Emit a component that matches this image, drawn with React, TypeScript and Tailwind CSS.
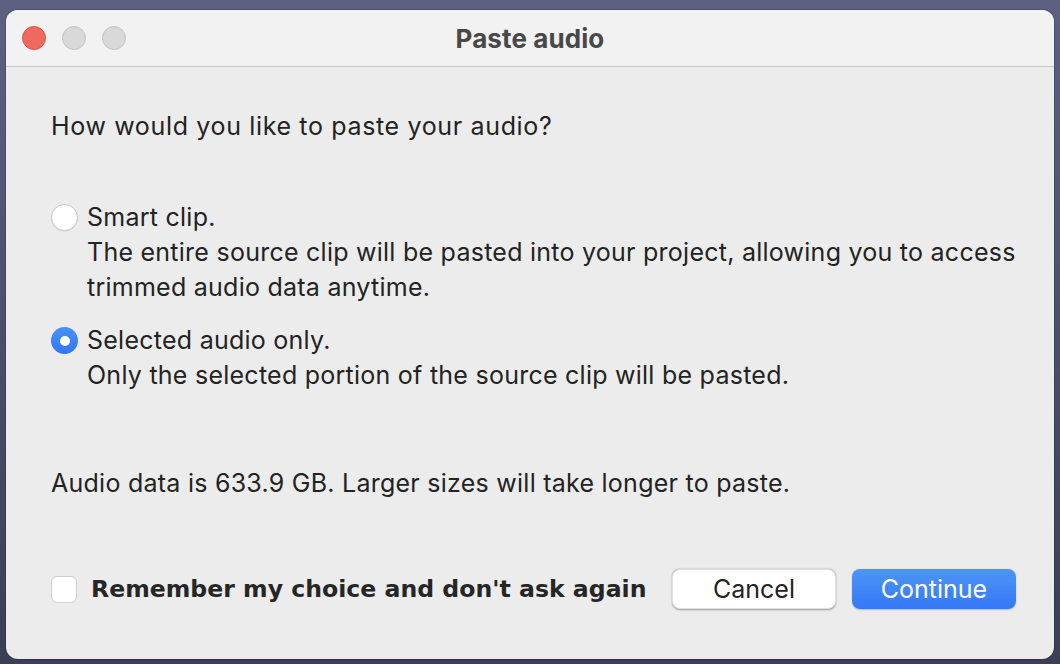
import React from "react";

export default function App() {
  const body = { fontFamily: "Inter, 'Noto Sans', sans-serif" };
  return (
    <div
      className="w-[1060px] h-[664px] overflow-hidden bg-gradient-to-b from-[#5d6081] to-[#3c3e55] pt-[10px] pl-[6px]"
      style={body}
    >
      <div className="w-[1048px] h-[649px] rounded-[12px] bg-[#ececec] overflow-hidden flex flex-col shadow-[0_0_0_1px_rgba(0,0,0,0.15)]">
        {/* Title bar */}
        <div className="relative h-[57px] shrink-0 bg-[#f1f2f1] border-b border-[#c9c9c9] flex items-center">
          <div className="flex items-center gap-[16px] pl-[16px]">
            <span className="w-[24px] h-[24px] rounded-full bg-[#ee6a5f] border border-[#d9554b]" />
            <span className="w-[24px] h-[24px] rounded-full bg-[#d9d9d9] border border-[#c3c3c3]" />
            <span className="w-[24px] h-[24px] rounded-full bg-[#d9d9d9] border border-[#c3c3c3]" />
          </div>
          <div className="absolute inset-0 flex items-center justify-center pointer-events-none">
            <span className="text-[26px] font-bold text-[#484848] tracking-[0.1px]">Paste audio</span>
          </div>
        </div>

        {/* Content */}
        <div className="flex flex-col pl-[45px] pr-[38px] pt-[42px] text-[25px] leading-[35px] tracking-[0.25px] text-[#232323]">
          <div className="tracking-[0.65px]">How would you like to paste your audio?</div>

          <div className="mt-[56px] flex flex-col gap-[18px]">
            <div className="flex items-start">
              <span className="mt-[4px] w-[27px] h-[27px] rounded-full bg-white border border-[#c9c9c9] shadow-[0_0.5px_1px_rgba(0,0,0,0.1)] shrink-0" />
              <div className="ml-[9px] flex flex-col whitespace-nowrap">
                <span>Smart clip.</span>
                <span>The entire source clip will be pasted into your project, allowing you to access</span>
                <span>trimmed audio data anytime.</span>
              </div>
            </div>
            <div className="flex items-start">
              <span className="mt-[4px] w-[27px] h-[27px] rounded-full bg-gradient-to-b from-[#4a90f8] to-[#3077f5] flex items-center justify-center shrink-0">
                <span className="w-[10px] h-[10px] rounded-full bg-white" />
              </span>
              <div className="ml-[9px] flex flex-col whitespace-nowrap">
                <span>Selected audio only.</span>
                <span>Only the selected portion of the source clip will be pasted.</span>
              </div>
            </div>
          </div>

          <div className="mt-[73px]">Audio data is 633.9 GB. Larger sizes will take longer to paste.</div>

          <div className="mt-[68px] flex items-center">
            <span className="w-[26px] h-[27px] rounded-[6px] bg-white border border-[#cfcfcf] shrink-0" />
            <span
              className="ml-[14px] text-[23.6px] font-bold text-[#262626] tracking-normal whitespace-nowrap"
              style={{ fontFamily: "'DejaVu Sans', Verdana, sans-serif" }}
            >
              Remember my choice and don't ask again
            </span>
            <div className="ml-auto flex items-center gap-[16px] tracking-normal">
              <button className="w-[164px] h-[40px] rounded-[8px] bg-white text-[25px] text-[#232323] shadow-[0_0.5px_2px_rgba(0,0,0,0.35)] border border-[#e0e0e0]">
                Cancel
              </button>
              <button className="w-[164px] h-[40px] rounded-[8px] bg-gradient-to-b from-[#4d95f8] to-[#3478f6] text-[25px] text-white shadow-[0_0.5px_1.5px_rgba(0,0,0,0.2)]">
                Continue
              </button>
            </div>
          </div>
        </div>
      </div>
    </div>
  );
}
